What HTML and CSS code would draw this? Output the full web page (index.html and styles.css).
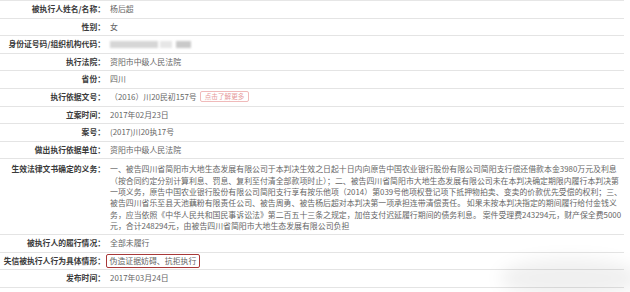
FILE: index.html
```html
<!DOCTYPE html>
<html lang="zh-CN">
<head>
<meta charset="utf-8">
<title>失信被执行人信息</title>
<link rel="stylesheet" href="styles.css">
</head>
<body>
<div class="page">
  <div class="table">
    <div class="row"><div class="label">被执行人姓名/名称：</div><div class="value">杨后超</div></div>
    <div class="row"><div class="label">性别：</div><div class="value">女</div></div>
    <div class="row"><div class="label">身份证号码/组织机构代码：</div><div class="value"><span class="blur b1"></span><span class="blur b2"></span><span class="blur b3"></span></div></div>
    <div class="row"><div class="label">执行法院：</div><div class="value">资阳市中级人民法院</div></div>
    <div class="row"><div class="label">省份：</div><div class="value">四川</div></div>
    <div class="row"><div class="label">执行依据文号：</div><div class="value">（2016）川20民初157号<span class="more">点击了解更多</span></div></div>
    <div class="row"><div class="label">立案时间：</div><div class="value">2017年02月23日</div></div>
    <div class="row"><div class="label">案号：</div><div class="value">(2017)川20执17号</div></div>
    <div class="row"><div class="label">做出执行依据单位：</div><div class="value">资阳市中级人民法院</div></div>
    <div class="row tall"><div class="label">生效法律文书确定的义务：</div><div class="value para">一、被告四川省简阳市大地生态发展有限公司于本判决生效之日起十日内向原告中国农业银行股份有限公司简阳支行偿还借款本金3980万元及利息<br>（按合同约定分别计算利息、罚息、复利至付清全部款项时止）；二、被告四川省简阳市大地生态发展有限公司未在本判决确定期限内履行本判决第<br>一项义务，原告中国农业银行股份有限公司简阳支行享有按乐他项（2014）第039号他项权登记项下抵押物拍卖、变卖的价款优先受偿的权利；三、<br>被告四川省乐至县天池藕粉有限责任公司、被告周勇、被告杨后超对本判决第一项承担连带清偿责任。 如果未按本判决指定的期间履行给付金钱义<br>务，应当依照《中华人民共和国民事诉讼法》第二百五十三条之规定，加倍支付迟延履行期间的债务利息。 案件受理费243294元，财产保全费5000<br>元，合计248294元，由被告四川省简阳市大地生态发展有限公司负担</div></div>
    <div class="row"><div class="label">被执行人的履行情况：</div><div class="value">全部未履行</div></div>
    <div class="row"><div class="label">失信被执行人行为具体情形：</div><div class="value"><span class="flag">伪造证据妨碍、抗拒执行</span></div></div>
    <div class="row"><div class="label">发布时间：</div><div class="value">2017年03月24日</div></div>
  </div>
  <div class="watermark"></div>
</div>
</body>
</html>
```
FILE: styles.css
```css
html, body {
  margin: 0;
  padding: 0;
  background: #ffffff;
}
body {
  font-family: "Noto Sans CJK SC", "Microsoft YaHei", sans-serif;
  font-size: 7.8px;
  color: #555;
}
.page {
  position: relative;
  width: 630px;
  height: 292px;
  overflow: hidden;
}
.table {
  width: 624px;
  border-top: 1px solid #e6e6e6;
}
.row {
  display: grid;
  grid-template-columns: 105px 1fr;
  border-bottom: 1px solid #e4e4e4;
  line-height: 16.6px;
  white-space: nowrap;
}
.label {
  text-align: right;
  font-weight: 700;
  color: #3a3a3a;
}
.value {
  padding-left: 5px;
  font-size: 7.9px;
  color: #666;
}
.row.tall {
  line-height: 11.3px;
  padding: 4px 0 3px;
}
.more {
  display: inline-block;
  margin-left: 3px;
  padding: 0 4px;
  font-size: 6.6px;
  line-height: 9px;
  color: #e69a9a;
  border: 1px solid #f0baba;
  border-radius: 2px;
  vertical-align: middle;
  position: relative;
  top: -1px;
}
.flag {
  display: inline-block;
  margin-left: -4.5px;
  padding: 0 3px;
  line-height: 12px;
  border: 1.5px solid #a83838;
  border-radius: 2px;
  vertical-align: middle;
  position: relative;
  top: -1px;
}
.blur {
  display: inline-block;
  height: 7px;
  vertical-align: middle;
  filter: blur(1.3px);
  position: relative;
  top: -1px;
}
.b1 {
  width: 48px;
  background: #d6d6d6;
}
.b2 {
  width: 12px;
  margin-left: 2px;
  background: #e6e6e6;
}
.b3 {
  width: 15px;
  margin-left: 4px;
  background: #c9c9c9;
}
.watermark {
  position: absolute;
  right: -10px;
  bottom: -6px;
  width: 140px;
  height: 40px;
  border-radius: 50%;
  background: rgba(0, 0, 0, 0.06);
  filter: blur(8px);
}
```
